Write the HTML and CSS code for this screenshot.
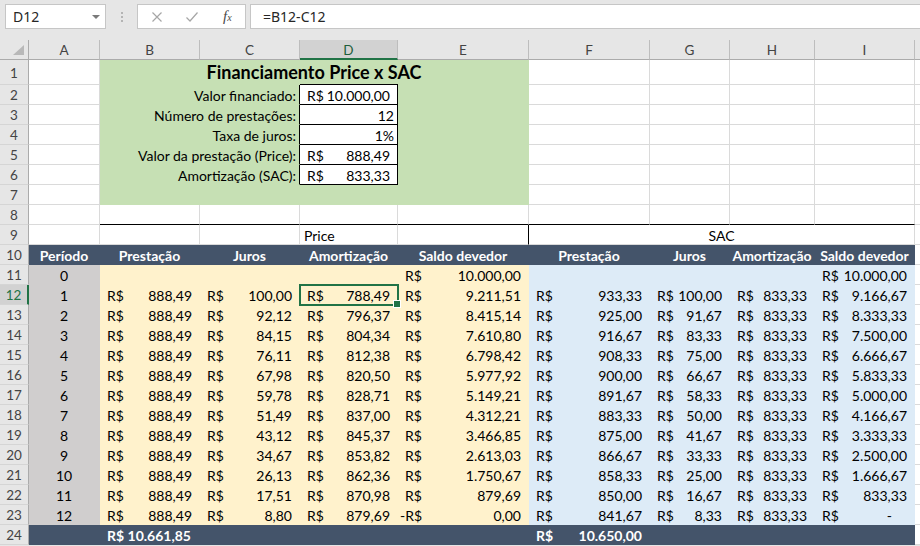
FILE: index.html
```html
<!DOCTYPE html>
<html lang="pt-BR">
<head>
<meta charset="utf-8">
<title>Financiamento Price x SAC</title>
<link rel="stylesheet" href="styles.css">
</head>
<body>
<div class="app">
  <div class="fbar">
    <div class="namebox"><span>D12</span><span class="dd"></span></div>
    <div class="dots"><i></i><i></i><i></i></div>
    <div class="btns">
      <svg class="ico" width="12" height="12" viewBox="0 0 12 12"><path d="M1.5 1.5 L10.5 10.5 M10.5 1.5 L1.5 10.5" stroke="#a6a6a6" stroke-width="1.2" fill="none"/></svg>
      <svg class="ico" width="14" height="12" viewBox="0 0 14 12"><path d="M1.5 6.5 L5 10 L12.5 1.5" stroke="#a6a6a6" stroke-width="1.2" fill="none"/></svg>
      <span class="fx"><i>f</i><small>x</small></span>
    </div>
    <div class="formula">=B12-C12</div>
  </div>

  <div class="sheet">
    <!-- column headers -->
    <div class="ch corner"><svg width="14" height="12" viewBox="0 0 14 12"><path d="M13 1 L13 11 L2 11 Z" fill="#b8b8b8"/></svg></div>
    <div class="ch">A</div>
    <div class="ch">B</div>
    <div class="ch">C</div>
    <div class="ch chsel">D</div>
    <div class="ch">E</div>
    <div class="ch">F</div>
    <div class="ch">G</div>
    <div class="ch">H</div>
    <div class="ch">I</div>
    <div class="ch last"></div>

    <!-- row 1 -->
    <div class="rh">1</div>
    <div class="c"></div>
    <div class="c g span4 title">Financiamento Price x SAC</div>
    <div class="c"></div><div class="c"></div><div class="c"></div><div class="c"></div><div class="c"></div>

    <!-- row 2 -->
    <div class="rh">2</div>
    <div class="c"></div>
    <div class="c g span2 lab">Valor financiado:</div>
    <div class="c val first acc"><span>R$</span><span>10.000,00</span></div>
    <div class="c g"></div>
    <div class="c"></div><div class="c"></div><div class="c"></div><div class="c"></div><div class="c"></div>

    <!-- row 3 -->
    <div class="rh">3</div>
    <div class="c"></div>
    <div class="c g span2 lab">Número de prestações:</div>
    <div class="c val num">12</div>
    <div class="c g"></div>
    <div class="c"></div><div class="c"></div><div class="c"></div><div class="c"></div><div class="c"></div>

    <!-- row 4 -->
    <div class="rh">4</div>
    <div class="c"></div>
    <div class="c g span2 lab">Taxa de juros:</div>
    <div class="c val num">1%</div>
    <div class="c g"></div>
    <div class="c"></div><div class="c"></div><div class="c"></div><div class="c"></div><div class="c"></div>

    <!-- row 5 -->
    <div class="rh">5</div>
    <div class="c"></div>
    <div class="c g span2 lab">Valor da prestação (Price):</div>
    <div class="c val acc"><span>R$</span><span>888,49</span></div>
    <div class="c g"></div>
    <div class="c"></div><div class="c"></div><div class="c"></div><div class="c"></div><div class="c"></div>

    <!-- row 6 -->
    <div class="rh">6</div>
    <div class="c"></div>
    <div class="c g span2 lab">Amortização (SAC):</div>
    <div class="c val acc"><span>R$</span><span>833,33</span></div>
    <div class="c g"></div>
    <div class="c"></div><div class="c"></div><div class="c"></div><div class="c"></div><div class="c"></div>

    <!-- row 7 -->
    <div class="rh">7</div>
    <div class="c"></div>
    <div class="c g span4"></div>
    <div class="c"></div><div class="c"></div><div class="c"></div><div class="c"></div><div class="c"></div>

    <!-- row 8 -->
    <div class="rh">8</div>
    <div class="c"></div>
    <div class="c bb"></div><div class="c bb"></div><div class="c bb"></div><div class="c bb"></div>
    <div class="c bb"></div><div class="c bb"></div><div class="c bb"></div><div class="c bb"></div>
    <div class="c"></div>

    <!-- row 9 -->
    <div class="rh">9</div>
    <div class="c"></div>
    <div class="c"></div>
    <div class="c"></div>
    <div class="c price">Price</div>
    <div class="c br"></div>
    <div class="c span4 ctr">SAC</div>
    <div class="c"></div>

    <!-- row 10 -->
    <div class="rh">10</div>
    <div class="c d ctr">Período</div>
    <div class="c d ctr">Prestação</div>
    <div class="c d ctr">Juros</div>
    <div class="c d ctr">Amortização</div>
    <div class="c d ctr">Saldo devedor</div>
    <div class="c d ctr">Prestação</div>
    <div class="c d ctr">Juros</div>
    <div class="c d ctr">Amortização</div>
    <div class="c d ctr">Saldo devedor</div>
    <div class="c"></div>

    <!-- row 11 -->
    <div class="rh">11</div>
    <div class="c p">0</div>
    <div class="c y"></div>
    <div class="c y"></div>
    <div class="c y"></div>
    <div class="c y acc"><span>R$</span><span>10.000,00</span></div>
    <div class="c b"></div>
    <div class="c b"></div>
    <div class="c b"></div>
    <div class="c b acc"><span>R$</span><span>10.000,00</span></div>
    <div class="c"></div>

    <!-- row 12 -->
    <div class="rh rhsel">12</div>
    <div class="c p">1</div>
    <div class="c y acc"><span>R$</span><span>888,49</span></div>
    <div class="c y acc"><span>R$</span><span>100,00</span></div>
    <div class="c y acc sel"><span>R$</span><span>788,49</span></div>
    <div class="c y acc"><span>R$</span><span>9.211,51</span></div>
    <div class="c b acc"><span>R$</span><span>933,33</span></div>
    <div class="c b acc"><span>R$</span><span>100,00</span></div>
    <div class="c b acc"><span>R$</span><span>833,33</span></div>
    <div class="c b acc"><span>R$</span><span>9.166,67</span></div>
    <div class="c"></div>

    <!-- row 13 -->
    <div class="rh">13</div>
    <div class="c p">2</div>
    <div class="c y acc"><span>R$</span><span>888,49</span></div>
    <div class="c y acc"><span>R$</span><span>92,12</span></div>
    <div class="c y acc"><span>R$</span><span>796,37</span></div>
    <div class="c y acc"><span>R$</span><span>8.415,14</span></div>
    <div class="c b acc"><span>R$</span><span>925,00</span></div>
    <div class="c b acc"><span>R$</span><span>91,67</span></div>
    <div class="c b acc"><span>R$</span><span>833,33</span></div>
    <div class="c b acc"><span>R$</span><span>8.333,33</span></div>
    <div class="c"></div>

    <!-- row 14 -->
    <div class="rh">14</div>
    <div class="c p">3</div>
    <div class="c y acc"><span>R$</span><span>888,49</span></div>
    <div class="c y acc"><span>R$</span><span>84,15</span></div>
    <div class="c y acc"><span>R$</span><span>804,34</span></div>
    <div class="c y acc"><span>R$</span><span>7.610,80</span></div>
    <div class="c b acc"><span>R$</span><span>916,67</span></div>
    <div class="c b acc"><span>R$</span><span>83,33</span></div>
    <div class="c b acc"><span>R$</span><span>833,33</span></div>
    <div class="c b acc"><span>R$</span><span>7.500,00</span></div>
    <div class="c"></div>

    <!-- row 15 -->
    <div class="rh">15</div>
    <div class="c p">4</div>
    <div class="c y acc"><span>R$</span><span>888,49</span></div>
    <div class="c y acc"><span>R$</span><span>76,11</span></div>
    <div class="c y acc"><span>R$</span><span>812,38</span></div>
    <div class="c y acc"><span>R$</span><span>6.798,42</span></div>
    <div class="c b acc"><span>R$</span><span>908,33</span></div>
    <div class="c b acc"><span>R$</span><span>75,00</span></div>
    <div class="c b acc"><span>R$</span><span>833,33</span></div>
    <div class="c b acc"><span>R$</span><span>6.666,67</span></div>
    <div class="c"></div>

    <!-- row 16 -->
    <div class="rh">16</div>
    <div class="c p">5</div>
    <div class="c y acc"><span>R$</span><span>888,49</span></div>
    <div class="c y acc"><span>R$</span><span>67,98</span></div>
    <div class="c y acc"><span>R$</span><span>820,50</span></div>
    <div class="c y acc"><span>R$</span><span>5.977,92</span></div>
    <div class="c b acc"><span>R$</span><span>900,00</span></div>
    <div class="c b acc"><span>R$</span><span>66,67</span></div>
    <div class="c b acc"><span>R$</span><span>833,33</span></div>
    <div class="c b acc"><span>R$</span><span>5.833,33</span></div>
    <div class="c"></div>

    <!-- row 17 -->
    <div class="rh">17</div>
    <div class="c p">6</div>
    <div class="c y acc"><span>R$</span><span>888,49</span></div>
    <div class="c y acc"><span>R$</span><span>59,78</span></div>
    <div class="c y acc"><span>R$</span><span>828,71</span></div>
    <div class="c y acc"><span>R$</span><span>5.149,21</span></div>
    <div class="c b acc"><span>R$</span><span>891,67</span></div>
    <div class="c b acc"><span>R$</span><span>58,33</span></div>
    <div class="c b acc"><span>R$</span><span>833,33</span></div>
    <div class="c b acc"><span>R$</span><span>5.000,00</span></div>
    <div class="c"></div>

    <!-- row 18 -->
    <div class="rh">18</div>
    <div class="c p">7</div>
    <div class="c y acc"><span>R$</span><span>888,49</span></div>
    <div class="c y acc"><span>R$</span><span>51,49</span></div>
    <div class="c y acc"><span>R$</span><span>837,00</span></div>
    <div class="c y acc"><span>R$</span><span>4.312,21</span></div>
    <div class="c b acc"><span>R$</span><span>883,33</span></div>
    <div class="c b acc"><span>R$</span><span>50,00</span></div>
    <div class="c b acc"><span>R$</span><span>833,33</span></div>
    <div class="c b acc"><span>R$</span><span>4.166,67</span></div>
    <div class="c"></div>

    <!-- row 19 -->
    <div class="rh">19</div>
    <div class="c p">8</div>
    <div class="c y acc"><span>R$</span><span>888,49</span></div>
    <div class="c y acc"><span>R$</span><span>43,12</span></div>
    <div class="c y acc"><span>R$</span><span>845,37</span></div>
    <div class="c y acc"><span>R$</span><span>3.466,85</span></div>
    <div class="c b acc"><span>R$</span><span>875,00</span></div>
    <div class="c b acc"><span>R$</span><span>41,67</span></div>
    <div class="c b acc"><span>R$</span><span>833,33</span></div>
    <div class="c b acc"><span>R$</span><span>3.333,33</span></div>
    <div class="c"></div>

    <!-- row 20 -->
    <div class="rh">20</div>
    <div class="c p">9</div>
    <div class="c y acc"><span>R$</span><span>888,49</span></div>
    <div class="c y acc"><span>R$</span><span>34,67</span></div>
    <div class="c y acc"><span>R$</span><span>853,82</span></div>
    <div class="c y acc"><span>R$</span><span>2.613,03</span></div>
    <div class="c b acc"><span>R$</span><span>866,67</span></div>
    <div class="c b acc"><span>R$</span><span>33,33</span></div>
    <div class="c b acc"><span>R$</span><span>833,33</span></div>
    <div class="c b acc"><span>R$</span><span>2.500,00</span></div>
    <div class="c"></div>

    <!-- row 21 -->
    <div class="rh">21</div>
    <div class="c p">10</div>
    <div class="c y acc"><span>R$</span><span>888,49</span></div>
    <div class="c y acc"><span>R$</span><span>26,13</span></div>
    <div class="c y acc"><span>R$</span><span>862,36</span></div>
    <div class="c y acc"><span>R$</span><span>1.750,67</span></div>
    <div class="c b acc"><span>R$</span><span>858,33</span></div>
    <div class="c b acc"><span>R$</span><span>25,00</span></div>
    <div class="c b acc"><span>R$</span><span>833,33</span></div>
    <div class="c b acc"><span>R$</span><span>1.666,67</span></div>
    <div class="c"></div>

    <!-- row 22 -->
    <div class="rh">22</div>
    <div class="c p">11</div>
    <div class="c y acc"><span>R$</span><span>888,49</span></div>
    <div class="c y acc"><span>R$</span><span>17,51</span></div>
    <div class="c y acc"><span>R$</span><span>870,98</span></div>
    <div class="c y acc"><span>R$</span><span>879,69</span></div>
    <div class="c b acc"><span>R$</span><span>850,00</span></div>
    <div class="c b acc"><span>R$</span><span>16,67</span></div>
    <div class="c b acc"><span>R$</span><span>833,33</span></div>
    <div class="c b acc"><span>R$</span><span>833,33</span></div>
    <div class="c"></div>

    <!-- row 23 -->
    <div class="rh">23</div>
    <div class="c p">12</div>
    <div class="c y acc"><span>R$</span><span>888,49</span></div>
    <div class="c y acc"><span>R$</span><span>8,80</span></div>
    <div class="c y acc"><span>R$</span><span>879,69</span></div>
    <div class="c y acc neg"><span>-R$</span><span>0,00</span></div>
    <div class="c b acc"><span>R$</span><span>841,67</span></div>
    <div class="c b acc"><span>R$</span><span>8,33</span></div>
    <div class="c b acc"><span>R$</span><span>833,33</span></div>
    <div class="c b acc zero"><span>R$</span><span>-</span></div>
    <div class="c"></div>

    <!-- row 24 -->
    <div class="rh">24</div>
    <div class="c d"></div>
    <div class="c d bold">R$ 10.661,85</div>
    <div class="c d"></div>
    <div class="c d"></div>
    <div class="c d"></div>
    <div class="c d acc bold"><span>R$</span><span>10.650,00</span></div>
    <div class="c d"></div>
    <div class="c d"></div>
    <div class="c d"></div>
    <div class="c"></div>
  </div>
</div>
</body>
</html>
```

FILE: styles.css
```css
* { box-sizing: border-box; }

html, body {
  margin: 0;
  padding: 0;
  background: #ffffff;
  overflow: hidden;
}

.app {
  width: 920px;
  height: 546px;
  background: #e6e6e6;
  font-family: Lato, "Open Sans", sans-serif;
  overflow: hidden;
}

/* ---------- formula bar ---------- */
.fbar {
  height: 40px;
  display: flex;
  align-items: flex-start;
  padding: 4px 0 0 5px;
  font-family: "Noto Sans", "Open Sans", sans-serif;
  font-size: 14px;
  color: #262626;
}

.namebox {
  width: 101px;
  height: 25px;
  background: #fff;
  border: 1px solid #c6c6c6;
  display: flex;
  align-items: center;
  justify-content: space-between;
  padding: 0 5px 0 7px;
}

.dd {
  width: 0;
  height: 0;
  border-left: 4px solid transparent;
  border-right: 4px solid transparent;
  border-top: 4px solid #7a7a7a;
}

.dots {
  width: 31px;
  height: 25px;
  display: flex;
  flex-direction: column;
  align-items: center;
  justify-content: center;
  gap: 2px;
}

.dots i {
  width: 2px;
  height: 2px;
  background: #b4b4b4;
}

.btns {
  width: 109px;
  height: 25px;
  background: #fff;
  border: 1px solid #c6c6c6;
  display: flex;
  align-items: center;
  padding: 0 0 0 13px;
}

.btns .ico:first-child { margin-right: 22px; }
.btns .ico:nth-child(2) { margin-right: 24px; }

.fx {
  font-family: "Liberation Serif", serif;
  font-size: 15px;
  color: #4a4a4a;
  line-height: 1;
}
.fx i { font-style: italic; }
.fx small { font-size: 10px; font-style: italic; }

.formula {
  flex: 1;
  height: 25px;
  margin-left: 4px;
  background: #fff;
  border: 1px solid #c6c6c6;
  border-right: none;
  display: flex;
  align-items: center;
  padding-left: 12px;
}

/* ---------- sheet grid ---------- */
.sheet {
  display: grid;
  grid-template-columns: 29px 71px 100px 100px 98px 131px 121px 80px 85px 100px 5px;
  grid-template-rows: 20px 25px repeat(23, 20px);
  background: #fff;
  font-size: 14px;
  color: #000;
}

.ch {
  background: #e6e6e6;
  border-right: 1px solid #bdbdbd;
  border-bottom: 1px solid #ababab;
  display: flex;
  align-items: center;
  justify-content: center;
  color: #444;
  font-size: 13.5px;
  padding-top: 1px;
}

.ch.corner {
  justify-content: flex-end;
  align-items: flex-end;
  padding: 0 3px 3px 0;
  border-right: 1px solid #ababab;
}

.ch.last { border-right: none; }

.ch.chsel {
  background: #d2d2d2;
  border-bottom: 2px solid #217346;
  color: #1e5e3a;
}

.rh {
  background: #e6e6e6;
  border-right: 1px solid #ababab;
  border-bottom: 1px solid #d5d5d5;
  display: flex;
  align-items: center;
  justify-content: center;
  color: #444;
  font-size: 13.5px;
  padding-top: 1px;
}

.rh.rhsel {
  background: #d2d2d2;
  border-right: 2px solid #217346;
  color: #217346;
}

.c {
  border-right: 1px solid #dadada;
  border-bottom: 1px solid #dadada;
  display: flex;
  align-items: center;
  padding: 1px 7px 0 7px;
  white-space: nowrap;
  min-width: 0;
  position: relative;
}

.span2 { grid-column: span 2; }
.span4 { grid-column: span 4; }

.ctr { justify-content: center; }

.acc { justify-content: space-between; }

/* green input block */
.g {
  background: #c6e0b4;
  border-color: #c6e0b4;
}

.title {
  justify-content: center;
  font-weight: 700;
  font-size: 18px;
  align-items: flex-end;
  padding-bottom: 1px;
}

.lab {
  justify-content: flex-end;
  padding-right: 3px;
  border-right-color: #000;
}

.val {
  background: #fff;
  border-right: 1px solid #000;
  border-bottom: 1px solid #000;
}

.val.first { box-shadow: 0 -1px 0 #000; }

.num {
  justify-content: flex-end;
  padding-right: 3px;
}

.bb { border-bottom-color: #000; }
.br { border-right-color: #000; }

.price { padding-left: 4px; }

/* tables */
.d {
  background: #44546a;
  border-color: #44546a;
  color: #fff;
  font-weight: 700;
}

.p {
  background: #d0cece;
  border-color: #d0cece;
  justify-content: center;
}

.y {
  background: #fff2cc;
  border-color: #fff2cc;
}

.b {
  background: #ddebf7;
  border-color: #ddebf7;
}

.neg { padding-left: 2px; }
.zero { padding-right: 22px; }

.bold { font-weight: 700; }

.sel {
  outline: 2px solid #217346;
  outline-offset: -1px;
  z-index: 1;
}

.sel::after {
  content: "";
  position: absolute;
  right: -4px;
  bottom: -4px;
  width: 6px;
  height: 6px;
  background: #217346;
  border: 1px solid #fff;
}
```
